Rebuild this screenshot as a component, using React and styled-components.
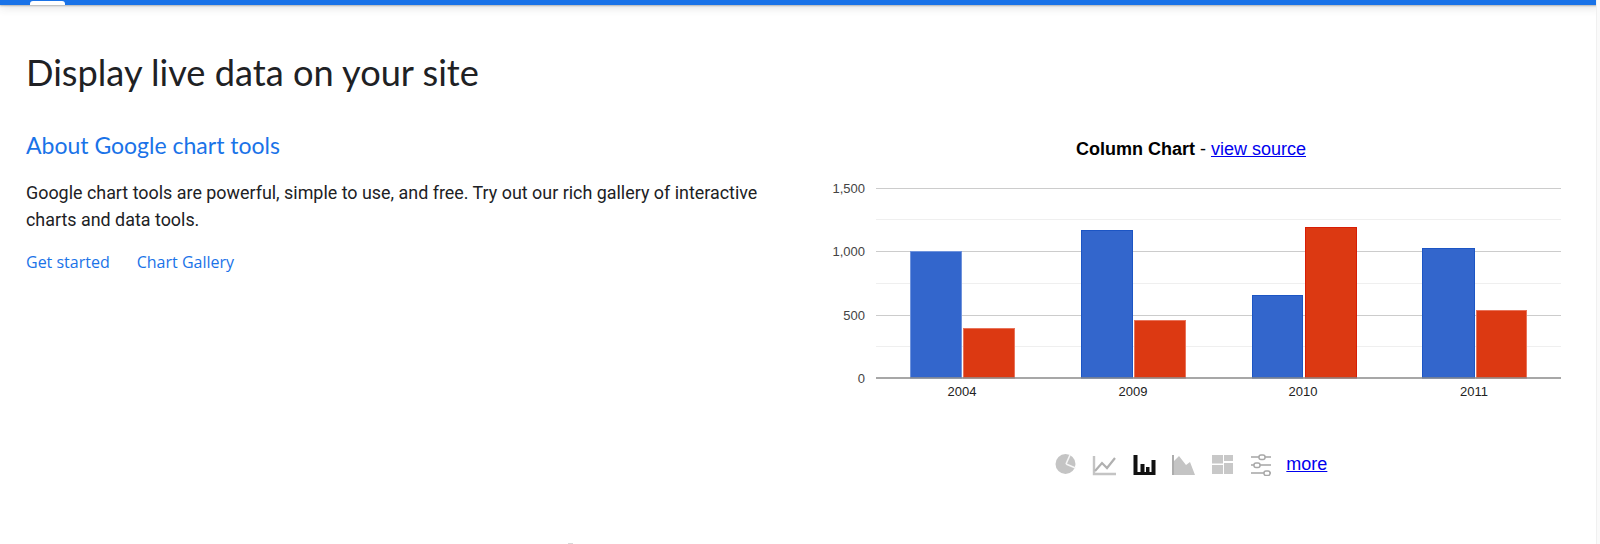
import React from 'react';
import styled, { createGlobalStyle } from 'styled-components';

const GlobalStyle = createGlobalStyle`
    html, body {
        margin: 0;
        padding: 0;
        background: #fff;
        overflow: hidden;
    }
`;

const Page = styled.div`
    position: relative;
    width: 1600px;
    height: 544px;
    overflow: hidden;
    background: #fff;
`;

const TopBar = styled.div`
    height: 5px;
    background: #1a73e8;
    box-shadow: 0 1px 2px rgba(60, 64, 67, 0.35), 0 2px 10px rgba(60, 64, 67, 0.2);
`;

const ActiveTab = styled.div`
    position: absolute;
    top: 1px;
    left: 30px;
    width: 35px;
    height: 4px;
    background: #fff;
    border-radius: 3px 3px 0 0;
`;

const ScrollEdge = styled.div`
    position: absolute;
    top: 0;
    right: 0;
    bottom: 0;
    width: 3px;
    background: #fafafa;
    border-left: 1px solid #f0f0f0;
`;

const CutOffMark = styled.div`
    position: absolute;
    left: 568px;
    bottom: 0;
    width: 5px;
    height: 1px;
    background: #d8d8d8;
`;

const Content = styled.main`
    display: grid;
    grid-template-columns: 784px 1fr;
    padding: 0 0 0 26px;
`;

const Heading = styled.h1`
    grid-column: 1 / -1;
    margin: 41px 0 0;
    font-family: Lato, sans-serif;
    font-weight: 400;
    font-size: 36.2px;
    line-height: 52px;
    color: #202124;
`;

const Intro = styled.section`
    padding-top: 31px;
`;

const SubHeading = styled.h2`
    margin: 0;
    font-family: Lato, sans-serif;
    font-weight: 400;
    font-size: 23px;
    line-height: 32px;
    color: #1a73e8;
`;

const Body = styled.p`
    margin: 18px 0 0;
    width: 740px;
    font-family: Roboto, sans-serif;
    font-size: 17.9px;
    line-height: 27px;
    color: #202124;
`;

const Links = styled.div`
    display: flex;
    gap: 27px;
    margin-top: 17px;
`;

const TextLink = styled.a`
    font-family: "Open Sans", sans-serif;
    font-size: 16px;
    line-height: 24px;
    color: #1a73e8;
    text-decoration: none;
`;

const ChartPanel = styled.section`
    display: flex;
    flex-direction: column;
    padding-top: 40px;
`;

const ChartTitle = styled.div`
    width: 762px;
    text-align: center;
    font-family: "Liberation Sans", Arial, sans-serif;
    font-size: 18px;
    line-height: 22px;
    color: #000;
`;

const Strong = styled.b`
    font-weight: 700;
`;

const PlainLink = styled.a`
    color: #00e;
    text-decoration: underline;
`;

const ChartSvg = styled.svg`
    display: block;
    margin-top: 12px;
    font-family: "Liberation Sans", Arial, sans-serif;
`;

const Switcher = styled.div`
    display: flex;
    align-items: center;
    gap: 15.4px;
    margin: 48px 0 0 243px;
`;

const IconSvg = styled.svg`
    display: block;
    flex: none;
    filter: blur(0.4px);
`;

const MoreLink = styled(PlainLink)`
    margin-left: -3px;
    font-family: "Liberation Sans", Arial, sans-serif;
    font-size: 18px;
    line-height: 22px;
`;

const CHART_LEFT = 810;
const CHART_TOP = 172;
const toX = x => x - CHART_LEFT;
const toY = y => y - CHART_TOP;

const gridLines = [
    { y: 188.5, major: true },
    { y: 219.5 },
    { y: 251.5, major: true },
    { y: 283.5 },
    { y: 315.5, major: true },
    { y: 346.5 },
];

const yLabels = [
    { y: 188, text: '1,500' },
    { y: 251, text: '1,000' },
    { y: 315, text: '500' },
    { y: 378, text: '0' },
];

const bars = [
    { x: 910, w: 52, top: 251.5, color: '#3366cc', edge: '#6f93dc' },
    { x: 963, w: 52, top: 328.5, color: '#dc3912', edge: '#e8735a' },
    { x: 1081, w: 52, top: 230.5, color: '#3366cc', edge: '#1c55c4' },
    { x: 1134, w: 52, top: 320.5, color: '#dc3912', edge: '#e8735a' },
    { x: 1252, w: 51, top: 295.5, color: '#3366cc', edge: '#1c55c4' },
    { x: 1305, w: 52, top: 227.5, color: '#dc3912', edge: '#d81d05' },
    { x: 1422, w: 53, top: 248.5, color: '#3366cc', edge: '#1c55c4' },
    { x: 1476, w: 51, top: 310.5, color: '#dc3912', edge: '#e8735a' },
];

const xLabels = [
    { x: 962, text: '2004' },
    { x: 1133, text: '2009' },
    { x: 1303, text: '2010' },
    { x: 1474, text: '2011' },
];

const ColumnChart = () => (
    <ChartSvg width="770" height="232" viewBox="0 0 770 232">
        {gridLines.map(line => (
            <line
                key={line.y}
                x1={toX(876)}
                x2={toX(1561)}
                y1={toY(line.y)}
                y2={toY(line.y)}
                stroke={line.major ? '#cccccc' : '#efefef'}
            />
        ))}
        {bars.map(bar => (
            <rect
                key={bar.x}
                x={toX(bar.x) + 0.5}
                y={toY(bar.top)}
                width={bar.w - 1}
                height={378 - bar.top}
                fill={bar.color}
                stroke={bar.edge}
            />
        ))}
        <line x1={toX(876)} x2={toX(1561)} y1={toY(378)} y2={toY(378)} stroke="#8a8a8a" strokeWidth="1.4" />
        {yLabels.map(label => (
            <text key={label.text} x={toX(865)} y={toY(label.y) + 4.5} textAnchor="end" fontSize="13" fill="#444">
                {label.text}
            </text>
        ))}
        {xLabels.map(label => (
            <text key={label.text} x={toX(label.x)} y={toY(396)} textAnchor="middle" fontSize="13" fill="#222">
                {label.text}
            </text>
        ))}
    </ChartSvg>
);

const Icon = ({ children }) => (
    <IconSvg width="24" height="24" viewBox="0 0 24 24" fill="#c4c4c4" stroke="none">
        {children}
    </IconSvg>
);

const PieIcon = () => (
    <Icon>
        <circle cx="12.5" cy="12" r="10" />
        <path d="M13 12 L17 3 M13 12 L22.5 16" stroke="#f6f6f6" strokeWidth="1.6" fill="none" />
    </Icon>
);

const LineIcon = () => (
    <Icon>
        <path d="M2 4 V22 H24" fill="none" stroke="#c4c4c4" strokeWidth="2.4" />
        <path d="M3 19 L10 11 L15 16 L23 6" fill="none" stroke="#b0b0b0" strokeWidth="2.2" />
    </Icon>
);

const BarsIcon = () => (
    <Icon>
        <path d="M1.5 3 H5.5 V20 H8.5 V12 H12.5 V20 H14 V15 H17.5 V20 H19.5 V8 H23.5 V23 H1.5 Z" fill="#111" />
    </Icon>
);

const AreaIcon = () => (
    <Icon>
        <path d="M1 3 H3 V9 L8 4 L15 13 L19 10 L24 23 H1 Z" />
        <path d="M2 3 V23" stroke="#a8a8a8" strokeWidth="1.6" />
    </Icon>
);

const TreemapIcon = () => (
    <Icon>
        <path d="M1 3 H12 V11.5 H1 Z M13 3 H22 V9 H13 Z M1 13 H12 V22 H1 Z M13 11 H22 V22 H13 Z" fill="#c8c8c8" />
    </Icon>
);

const ControlsIcon = () => (
    <Icon>
        <path d="M1 5 H21 M1 13 H21 M1 21 H21" stroke="#bbbbbb" strokeWidth="2.2" fill="none" />
        <rect x="9" y="3" width="6" height="4.5" rx="2" fill="#fff" stroke="#a8a8a8" strokeWidth="1.5" />
        <rect x="4" y="11" width="6" height="4.5" rx="2" fill="#fff" stroke="#a8a8a8" strokeWidth="1.5" />
        <rect x="14" y="19" width="6" height="4.5" rx="2" fill="#fff" stroke="#a8a8a8" strokeWidth="1.5" />
    </Icon>
);

export default function App() {
    return (
        <Page>
            <GlobalStyle />
            <TopBar />
            <ActiveTab />
            <ScrollEdge />
            <CutOffMark />
            <Content>
                <Heading>Display live data on your site</Heading>
                <Intro>
                    <SubHeading>About Google chart tools</SubHeading>
                    <Body>
                        Google chart tools are powerful, simple to use, and free. Try out our rich gallery of interactive charts and data tools.
                    </Body>
                    <Links>
                        <TextLink href="#">Get started</TextLink>
                        <TextLink href="#">Chart Gallery</TextLink>
                    </Links>
                </Intro>
                <ChartPanel>
                    <ChartTitle>
                        <Strong>Column Chart</Strong> - <PlainLink href="#">view source</PlainLink>
                    </ChartTitle>
                    <ColumnChart />
                    <Switcher>
                        <PieIcon />
                        <LineIcon />
                        <BarsIcon />
                        <AreaIcon />
                        <TreemapIcon />
                        <ControlsIcon />
                        <MoreLink href="#">more</MoreLink>
                    </Switcher>
                </ChartPanel>
            </Content>
        </Page>
    );
}
